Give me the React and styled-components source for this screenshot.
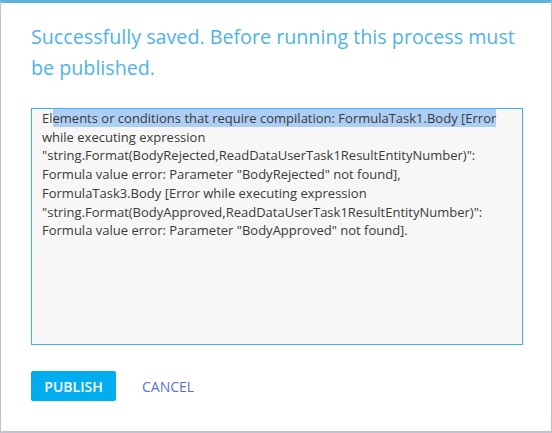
import React from "react";
import styled, { createGlobalStyle } from "styled-components";

const Global = createGlobalStyle`
  html, body { margin: 0; padding: 0; background: #ffffff; }
  body { font-family: "Open Sans", "Liberation Sans", sans-serif; }
`;

const Dialog = styled.div`
  box-sizing: border-box;
  width: 552px;
  height: 433px;
  background: #ffffff;
  border-top: 3px solid #5ab4de;
  border-left: 1px solid #c4c2ce;
  border-right: 1px solid #c4c2ce;
  border-bottom: 2px solid #c4c2ce;
  padding: 18px 28px 0 30px;
  display: flex;
  flex-direction: column;
`;

const Title = styled.h1`
  margin: 0;
  font-family: "Open Sans", sans-serif;
  font-weight: 400;
  font-size: 19.7px;
  line-height: 31px;
  color: #4fb3e6;
`;

const MessageBox = styled.div`
  box-sizing: border-box;
  margin-top: 25px;
  width: 492px;
  height: 237px;
  background: #f7f7f7;
  border: 1px solid #3fb0f0;
  padding: 0 10px;
  font-size: 13px;
  line-height: 18.7px;
  color: #3a3a3a;
`;

const Line = styled.div`
  white-space: nowrap;
`;

const Selected = styled.span`
  background: #aecff5;
`;

const Actions = styled.div`
  display: flex;
  align-items: center;
  gap: 26px;
  margin-top: 26px;
`;

const PrimaryButton = styled.button`
  height: 30px;
  width: 85px;
  border: none;
  border-radius: 2px;
  background: #00aeef;
  color: #ffffff;
  font-family: "Open Sans", sans-serif;
  font-size: 14px;
  font-weight: 600;
  padding: 0;
  cursor: pointer;
`;

const LinkButton = styled.button`
  border: none;
  background: none;
  padding: 0;
  color: #5a6fd6;
  font-family: "Open Sans", sans-serif;
  font-size: 14px;
  font-weight: 400;
  cursor: pointer;
`;

const lines = [
  "while executing expression",
  "\"string.Format(BodyRejected,ReadDataUserTask1ResultEntityNumber)\":",
  "Formula value error: Parameter \"BodyRejected\" not found],",
  "FormulaTask3.Body [Error while executing expression",
  "\"string.Format(BodyApproved,ReadDataUserTask1ResultEntityNumber)\":",
  "Formula value error: Parameter \"BodyApproved\" not found].",
];

export default function App() {
  return (
    <>
      <Global />
      <Dialog>
        <Title>
          Successfully saved. Before running this process must be published.
        </Title>
        <MessageBox>
          <Line>
            El
            <Selected>
              ements or conditions that require compilation: FormulaTask1.Body [Error{" "}
            </Selected>
          </Line>
          {lines.map((t, i) => (
            <Line key={i}>{t}</Line>
          ))}
        </MessageBox>
        <Actions>
          <PrimaryButton>PUBLISH</PrimaryButton>
          <LinkButton>CANCEL</LinkButton>
        </Actions>
      </Dialog>
    </>
  );
}
